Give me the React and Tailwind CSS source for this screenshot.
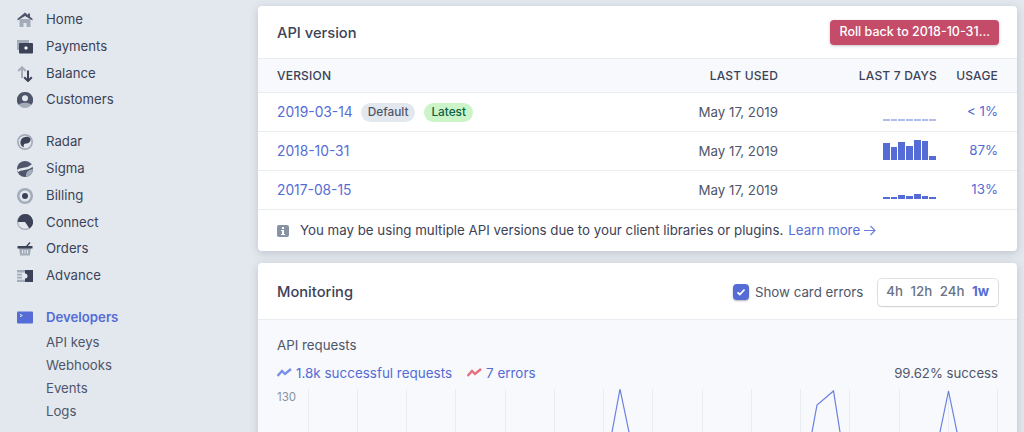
import React from "react";

const Home = () => (
  <svg width="16" height="16" viewBox="0 0 16 16">
    <path d="M2.500 7h11v8h-4v-4h-3v4h-4z" fill="#a3acb9" />
    <path d="M8 0.500L0.500 6.800v1.700L8 4l7.500 4.500V6.800L13 4.700V1.500h-2v1.600z" fill="#4f566b" />
  </svg>
);
const Payments = () => (
  <svg width="16" height="16" viewBox="0 0 16 16">
    <path d="M0 1h12v3H2.500v7H0z" fill="#a3acb9" />
    <rect x="2" y="4" width="14" height="10.500" rx="1" fill="#3c4257" />
    <rect x="7.500" y="7.500" width="3" height="3" rx="1" fill="#fff" />
  </svg>
);
const Balance = () => (
  <svg width="16" height="16" viewBox="0 0 16 16" fill="none" strokeWidth="2">
    <path d="M5 12V1.500M1.200 5L5 1.300 8.800 5" stroke="#a3acb9" />
    <path d="M11 4.500V15M7.200 11.300L11 15l3.800-3.700" stroke="#3c4257" />
  </svg>
);
const Customers = () => (
  <svg width="16" height="16" viewBox="0 0 16 16">
    <circle cx="8" cy="8" r="8" fill="#a3acb9" />
    <path d="M8 0a8 8 0 0 1 6.500 12.700C12.800 11.300 10.500 10.800 8 10.800s-4.800.5-6.500 1.900A8 8 0 0 1 8 0z" fill="#4f566b" />
    <circle cx="8" cy="6.300" r="3" fill="#e3e8ee" />
  </svg>
);
const Radar = () => (
  <svg width="16" height="16" viewBox="0 0 16 16">
    <circle cx="8" cy="8" r="8" fill="#a3acb9" />
    <circle cx="8" cy="8" r="6.300" fill="#e3e8ee" />
    <path d="M13.500 4.500C14 8.500 11 9.300 9 9.500S6 11 7 13.200C4 12.500 2.500 9 4 6S11 1.500 13.500 4.500z" fill="#3c4257" />
  </svg>
);
const Sigma = () => (
  <svg width="16" height="16" viewBox="0 0 16 16">
    <circle cx="8" cy="8" r="8" fill="#4f566b" />
    <path d="M16 8a8 8 0 0 1-7 7.900C8.500 12 10 9 16 8z" fill="#a3acb9" />
    <path d="M0.500 10C5 6.500 9 10 15.500 4.500" fill="none" stroke="#e3e8ee" strokeWidth="2.500" />
  </svg>
);
const Billing = () => (
  <svg width="16" height="16" viewBox="0 0 16 16">
    <circle cx="8" cy="8" r="8" fill="#a3acb9" />
    <circle cx="8" cy="8" r="5.500" fill="#e3e8ee" />
    <circle cx="8" cy="8" r="3" fill="#3c4257" />
  </svg>
);
const Connect = () => (
  <svg width="16" height="16" viewBox="0 0 16 16">
    <circle cx="8" cy="8" r="7.400" fill="#e3e8ee" stroke="#a3acb9" strokeWidth="1.200" />
    <path d="M8 0a8 8 0 0 1 4.500 14.600L8 8H0.700C1 3.500 4 0 8 0z" fill="#3c4257" />
  </svg>
);
const Orders = () => (
  <svg width="16" height="16" viewBox="0 0 16 16">
    <path d="M2 7h12l-1.200 7.500H3.200z" fill="#a3acb9" />
    <path d="M5.500 9v3.500M8 9v3.500M10.500 9v3.500" stroke="#e3e8ee" />
    <path d="M0.500 5h15v2.500H0.500z" fill="#3c4257" />
    <path d="M9.500 5.500L13 1.500" stroke="#3c4257" strokeWidth="1.300" />
  </svg>
);
const Advance = () => (
  <svg width="16" height="16" viewBox="0 0 16 16">
    <path d="M0 2h8v2.500H0zM0 5.700h5v1.800H0zM0 8.700h5v1.800H0zM0 11.700h8V14H0z" fill="#a3acb9" />
    <path d="M8 2h8v12H8v-3.500a2.500 2.500 0 0 0 0-5z" fill="#3c4257" />
  </svg>
);
const Terminal = () => (
  <svg width="16" height="16" viewBox="0 0 16 16">
    <rect y="1.500" width="16" height="12" rx="1" fill="#556cd6" />
    <path d="M3 4.300l2.300 1.200L3 6.700" fill="none" stroke="#e3e8ee" strokeWidth="1" />
  </svg>
);

const GROUPS = [
  [
    { icon: Home, label: "Home" },
    { icon: Payments, label: "Payments" },
    { icon: Balance, label: "Balance" },
    { icon: Customers, label: "Customers" },
  ],
  [
    { icon: Radar, label: "Radar" },
    { icon: Sigma, label: "Sigma" },
    { icon: Billing, label: "Billing" },
    { icon: Connect, label: "Connect" },
    { icon: Orders, label: "Orders" },
    { icon: Advance, label: "Advance" },
  ],
];

const ROWS = [
  { version: "2019-03-14", badges: true, usage: "< 1%", bars: [2, 2, 2, 2, 2, 2, 2], light: true },
  { version: "2018-10-31", usage: "87%", bars: [17, 13, 18, 14, 20, 19, 4] },
  { version: "2017-08-15", usage: "13%", bars: [2, 2, 4, 3, 5, 3, 2] },
];

const GRID_X = [0, 49, 98, 147, 197, 246, 295, 344, 394, 443, 492, 541, 591, 640, 689];

function Sidebar() {
  return (
    <div className="w-[258px] shrink-0 pl-[17px] pt-[6.8px] text-[13.2px] text-[#3c4257]">
      {GROUPS.map((group, i) => (
        <div key={i} className="mb-[15.5px]">
          {group.map(({ icon: Icon, label }) => (
            <div key={label} className="flex h-[26.7px] items-center gap-[13px]">
              <Icon />
              <span>{label}</span>
            </div>
          ))}
        </div>
      ))}
      <div className="flex h-[26.7px] items-center gap-[13px] font-semibold text-[#556cd6]">
        <Terminal />
        <span>Developers</span>
      </div>
      <div className="pl-[29px] text-[#4f566b]">
        {["API keys", "Webhooks", "Events", "Logs"].map((item) => (
          <div key={item} className="flex h-[23px] items-center">
            {item}
          </div>
        ))}
      </div>
    </div>
  );
}

function Bars({ values, light }) {
  return (
    <div className="flex h-[21px] w-[53px] items-end gap-px">
      {values.map((h, i) => (
        <div
          key={i}
          className={light ? "flex-1 bg-[#b3bdec]" : "flex-1 bg-[#556cd6]"}
          style={{ height: h }}
        />
      ))}
    </div>
  );
}

function ApiVersion() {
  return (
    <div className="rounded-[4px] bg-white shadow-[0_2px_8px_rgba(60,66,87,0.22)]">
      <div className="flex h-[53px] items-center justify-between border-b border-[#e9edf2] pl-[19px] pr-[18px]">
        <span className="pt-[2px] text-[14.7px] font-medium text-[#3c4257]">API version</span>
        <button className="h-[25px] rounded-[4px] bg-[#c44c68] px-[9px] text-[12.5px] font-medium text-white shadow-[0_1px_3px_rgba(60,66,87,0.3)]">
          Roll back to 2018-10-31...
        </button>
      </div>
      <div className="flex h-[34px] items-center border-b border-[#e9edf2] bg-[#f7f9fc] pl-[19px] pr-[19px] pt-px text-[12px] font-medium tracking-[0.2px] text-[#3c4257]">
        <span className="flex-1">VERSION</span>
        <span className="w-[100px] text-right">LAST USED</span>
        <span className="w-[159px] text-right">LAST 7 DAYS</span>
        <span className="w-[61px] text-right">USAGE</span>
      </div>
      {ROWS.map((row) => (
        <div
          key={row.version}
          className="flex h-[39px] items-center border-b border-[#e9edf2] pl-[19px] pr-[19px] text-[13.3px]"
        >
          <div className="flex flex-1 items-center">
            <span className="text-[13.8px] text-[#556cd6]">{row.version}</span>
            {row.badges && (
              <>
                <span className="ml-[8px] rounded-[9.5px] bg-[#e3e8ee] px-[7px] py-px text-[11.8px] font-medium leading-[17px] text-[#4f566b]">
                  Default
                </span>
                <span className="ml-[9px] rounded-[9.5px] bg-[#cbf4c9] px-[7px] py-px text-[11.8px] font-medium leading-[17px] text-[#0e6245]">
                  Latest
                </span>
              </>
            )}
          </div>
          <span className="w-[100px] pt-px text-right text-[#4f566b]">May 17, 2019</span>
          <div className="flex w-[158px] justify-end self-end pb-[10px]">
            <Bars values={row.bars} light={row.light} />
          </div>
          <span className="w-[62px] self-start pt-[9px] text-right text-[#556cd6]">{row.usage}</span>
        </div>
      ))}
      <div className="flex h-[41px] items-center pl-[19px] text-[13.3px] text-[#3c4257]">
        <svg width="12" height="12" viewBox="0 0 12 12" className="mr-[11px]">
          <rect width="12" height="12" rx="2" fill="#8792a2" />
          <rect x="5" y="2" width="2" height="2" fill="#fff" />
          <path d="M4 5h3v4h1v1H4V9h1V6H4z" fill="#fff" />
        </svg>
        <span>You may be using multiple API versions due to your client libraries or plugins.</span>
        <span className="ml-[5px] flex items-center gap-[4px] text-[#556cd6]">
          Learn more
          <svg width="12" height="11" viewBox="0 0 12 11" fill="none">
            <path d="M0 5.500h11M6.500 1l4.500 4.500L6.500 10" stroke="#6c7fdc" strokeWidth="1.100" />
          </svg>
        </span>
      </div>
    </div>
  );
}

function Monitoring() {
  return (
    <div className="mt-[12px] rounded-t-[4px] bg-white shadow-[0_2px_8px_rgba(60,66,87,0.22)]">
      <div className="flex h-[57px] items-center border-b border-[#e9edf2] pl-[19px] pr-[19px] pt-[2px]">
        <span className="flex-1 text-[14.7px] font-medium text-[#3c4257]">Monitoring</span>
        <div className="flex h-[16px] w-[16px] items-center justify-center rounded-[4px] bg-[#556cd6] shadow-[0_1px_2px_rgba(60,66,87,0.4)]">
          <svg width="10" height="10" viewBox="0 0 10 10" fill="none">
            <path d="M1.500 5.300l2.300 2.200 4.700-5" stroke="#fff" strokeWidth="1.800" />
          </svg>
        </div>
        <span className="ml-[6px] pt-px text-[13.3px] text-[#4f566b]">Show card errors</span>
        <div className="ml-[15px] flex h-[27px] items-center gap-[7.5px] rounded-[4px] bg-white pl-[8px] pr-[9px] text-[13.3px] font-medium text-[#697386] shadow-[0_0_0_1px_rgba(60,66,87,0.14),0_1px_2px_rgba(60,66,87,0.14)]">
          <span>4h</span>
          <span>12h</span>
          <span>24h</span>
          <span className="font-bold text-[#556cd6]">1w</span>
        </div>
      </div>
      <div className="bg-[#f7f9fc] pl-[19px] pr-[19px] pt-[16px]">
        <div className="text-[13.3px] leading-[18px] text-[#4f566b]">API requests</div>
        <div className="mt-[9.5px] flex items-center text-[13.45px] leading-[18px] text-[#556cd6]">
          <svg width="15" height="10" viewBox="0 0 15 10" fill="none" strokeWidth="2.400" className="mr-[4px]">
            <path d="M0.500 8L5 3l3 3 6-5" stroke="#7c8fe6" />
          </svg>
          <span>1.8k successful requests</span>
          <svg width="15" height="10" viewBox="0 0 15 10" fill="none" strokeWidth="2.400" className="ml-[15px] mr-[4px]">
            <path d="M0.500 8L5 3l3 3 6-5" stroke="#e56f7f" />
          </svg>
          <span className="flex-1">7 errors</span>
          <span className="text-[13.2px] text-[#4f566b]">99.62% success</span>
        </div>
        <div className="mt-[7.5px] flex">
          <span className="w-[31px] pt-px text-[11.5px] leading-[14px] text-[#8792a2]">130</span>
          <svg width="690" height="60" className="block shrink-0 overflow-visible">
            {GRID_X.map((x) => (
              <line key={x} x1={x + 0.5} x2={x + 0.5} y1="0" y2="60" stroke="#e9edf2" />
            ))}
            <g fill="none" stroke="#6a7fe0" strokeWidth="1.200">
              <polyline points="304,43 312,0 321,43" />
              <polyline points="504,43 509,16 525.5,2 532,43" />
              <polyline points="632,43 640.5,2 649,43" />
            </g>
          </svg>
        </div>
      </div>
    </div>
  );
}

export default function App() {
  return (
    <div
      className="flex h-[432px] w-[1024px] overflow-hidden bg-[#e3e8ee]"
      style={{ fontFamily: "Inter, 'Noto Sans', sans-serif" }}
    >
      <Sidebar />
      <div className="w-[759px] shrink-0 pt-[6px]">
        <ApiVersion />
        <Monitoring />
      </div>
    </div>
  );
}
